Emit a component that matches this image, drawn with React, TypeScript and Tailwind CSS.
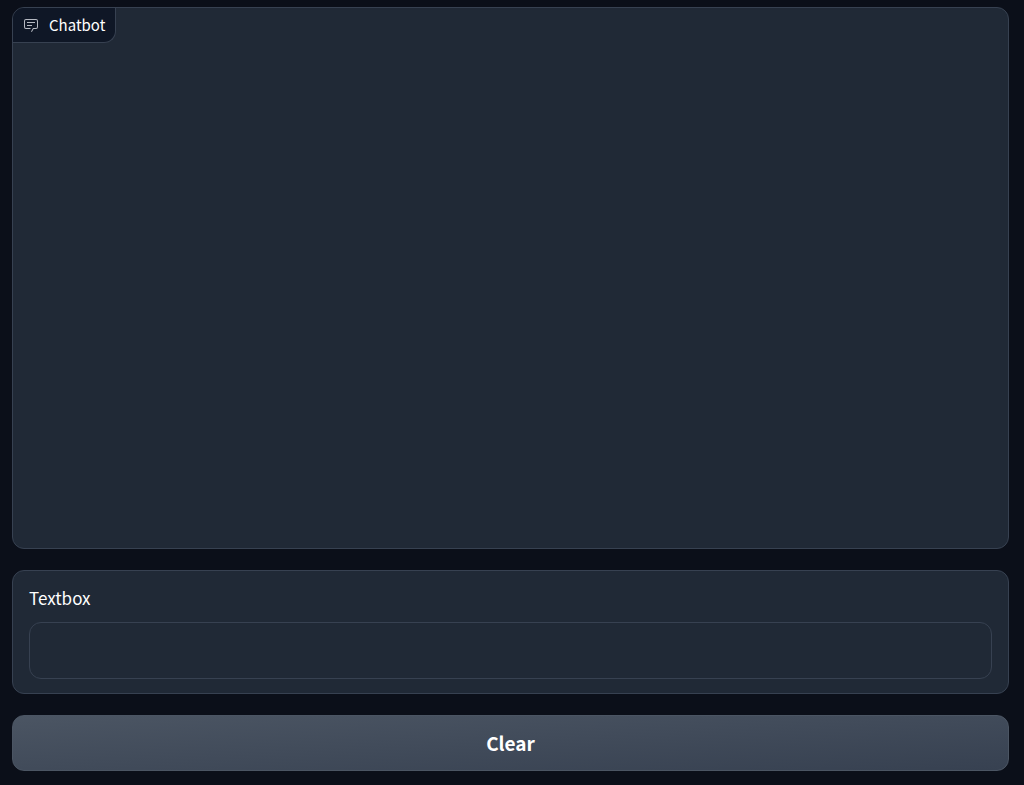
import React, { useState } from 'react';

const ChatIcon = () => (
  <svg viewBox="0 0 32 32" fill="currentColor" className="w-4 h-4 text-[#b6bac2]" aria-hidden="true">
    <path d="M17.74 30L16 29l4-7h6a2 2 0 0 0 2-2V8a2 2 0 0 0-2-2H6a2 2 0 0 0-2 2v12a2 2 0 0 0 2 2h9v2H6a4 4 0 0 1-4-4V8a4 4 0 0 1 4-4h20a4 4 0 0 1 4 4v12a4 4 0 0 1-4 4h-4.84Z" />
    <path d="M8 10h16v2H8zm0 6h10v2H8z" />
  </svg>
);

const App = () => {
  const [message, setMessage] = useState('');

  return (
    <main className="min-h-screen bg-[#0b0f19] pt-[7px] pb-3 pl-3 pr-[15px] flex flex-col gap-[21px] font-['Noto_Sans_CJK_SC','Noto_Sans',sans-serif] text-white">
      {/* Chat history */}
      <section aria-labelledby="chatbot-label" className="min-h-[542px] flex items-start bg-[#202936] border border-[#374151] rounded-xl overflow-hidden">
        <h2 id="chatbot-label" className="flex items-center gap-[10px] px-[10px] py-[5px] bg-[#0f1726] border-r border-b border-[#374151] rounded-br-xl text-[15px] leading-6">
          <ChatIcon />
          Chatbot
        </h2>
      </section>

      {/* Message input */}
      <section className="bg-[#202936] border border-[#374151] rounded-xl px-4 pt-[15px] pb-[14px]">
        <label htmlFor="message" className="block mb-3 text-[17px] leading-6">Textbox</label>
        <input
          id="message"
          type="text"
          value={message}
          onChange={(e) => setMessage(e.target.value)}
          className="block w-full h-[57px] px-4 bg-[#202936] border border-[#374151] rounded-xl text-[17px] outline-none focus:border-gray-500"
        />
      </section>

      <button
        type="button"
        onClick={() => setMessage('')}
        className="w-full h-14 rounded-xl border border-[#4b5563] bg-linear-to-br from-[#4b5563] to-[#374151] text-[19px] font-bold"
      >
        Clear
      </button>
    </main>
  );
};

export default App;
